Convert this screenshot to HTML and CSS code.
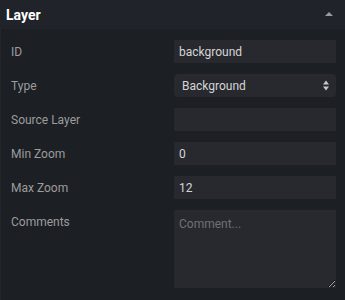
FILE: index.html
```html
<!DOCTYPE html>
<html>
<head>
<meta charset="utf-8">
<link rel="stylesheet" href="styles.css">
</head>
<body>
<div class="panel">
  <div class="group-header">
    <span class="group-title">Layer</span>
    <svg class="caret" width="8" height="5" viewBox="0 0 8 5"><path d="M0 5 L4 1 L8 5 Z" fill="#9a9ba0"/></svg>
  </div>
  <div class="group-body">
    <div class="row">
      <label class="label">ID</label>
      <div class="field"><input class="input" type="text" value="background"></div>
    </div>
    <div class="row">
      <label class="label">Type</label>
      <div class="field select-wrap">
        <div class="select">Background</div>
        <svg class="select-arrows" width="6" height="11" viewBox="0 0 6 11"><path d="M0 4.5 L3 0.5 L6 4.5 Z M0 6.5 L3 10.5 L6 6.5 Z" fill="#c8c8c8"/></svg>
      </div>
    </div>
    <div class="row">
      <label class="label">Source Layer</label>
      <div class="field"><input class="input" type="text" value=""></div>
    </div>
    <div class="row">
      <label class="label">Min Zoom</label>
      <div class="field"><input class="input" type="text" value="0"></div>
    </div>
    <div class="row">
      <label class="label">Max Zoom</label>
      <div class="field"><input class="input" type="text" value="12"></div>
    </div>
    <div class="row row-top">
      <label class="label">Comments</label>
      <div class="field"><textarea class="textarea" placeholder="Comment..."></textarea></div>
    </div>
  </div>
</div>
</body>
</html>
```
FILE: styles.css
```css
html, body {
  margin: 0;
  padding: 0;
  background: #1c1f24;
  width: 345px;
  height: 300px;
  overflow: hidden;
}
.panel {
  font-family: Roboto, "Liberation Sans", sans-serif;
  font-size: 12px;
  color: #9a9a9a;
}
.group-header {
  display: flex;
  align-items: center;
  justify-content: space-between;
  height: 29px;
  padding: 0 12px 0 6px;
  background: #20232a;
}
.group-title {
  font-weight: 700;
  font-size: 14px;
  color: #ffffff;
}
.caret {
  display: block;
  margin-top: -2px;
}
.group-body {
  display: flex;
  flex-direction: column;
  gap: 11px;
  padding: 11px 9px 12px 10px;
  border-left: 1px solid #23262c;
}
.row {
  display: flex;
  align-items: center;
  height: 23px;
}
.row-top {
  align-items: flex-start;
  height: 78px;
}
.label {
  width: 163px;
  flex: none;
  color: #9c9c9c;
}
.row-top .label {
  padding-top: 5px;
}
.field {
  flex: 1;
  height: 100%;
  position: relative;
}
.input, .textarea, .select {
  box-sizing: border-box;
  width: 100%;
  height: 100%;
  margin: 0;
  border: none;
  outline: none;
  background: #27292e;
  color: #d6d6d6;
  font-family: Roboto, "Liberation Sans", sans-serif;
  font-size: 12px;
  padding: 0 5px;
  display: block;
}
.select {
  display: flex;
  align-items: center;
  padding: 0 8px;
  border-radius: 4px;
}
.select-arrows {
  position: absolute;
  right: 7px;
  top: 6px;
}
.textarea {
  padding: 7px 5px 5px;
  resize: vertical;
  background: #28292e;
}
.textarea::placeholder {
  color: #6f7075;
}
```
